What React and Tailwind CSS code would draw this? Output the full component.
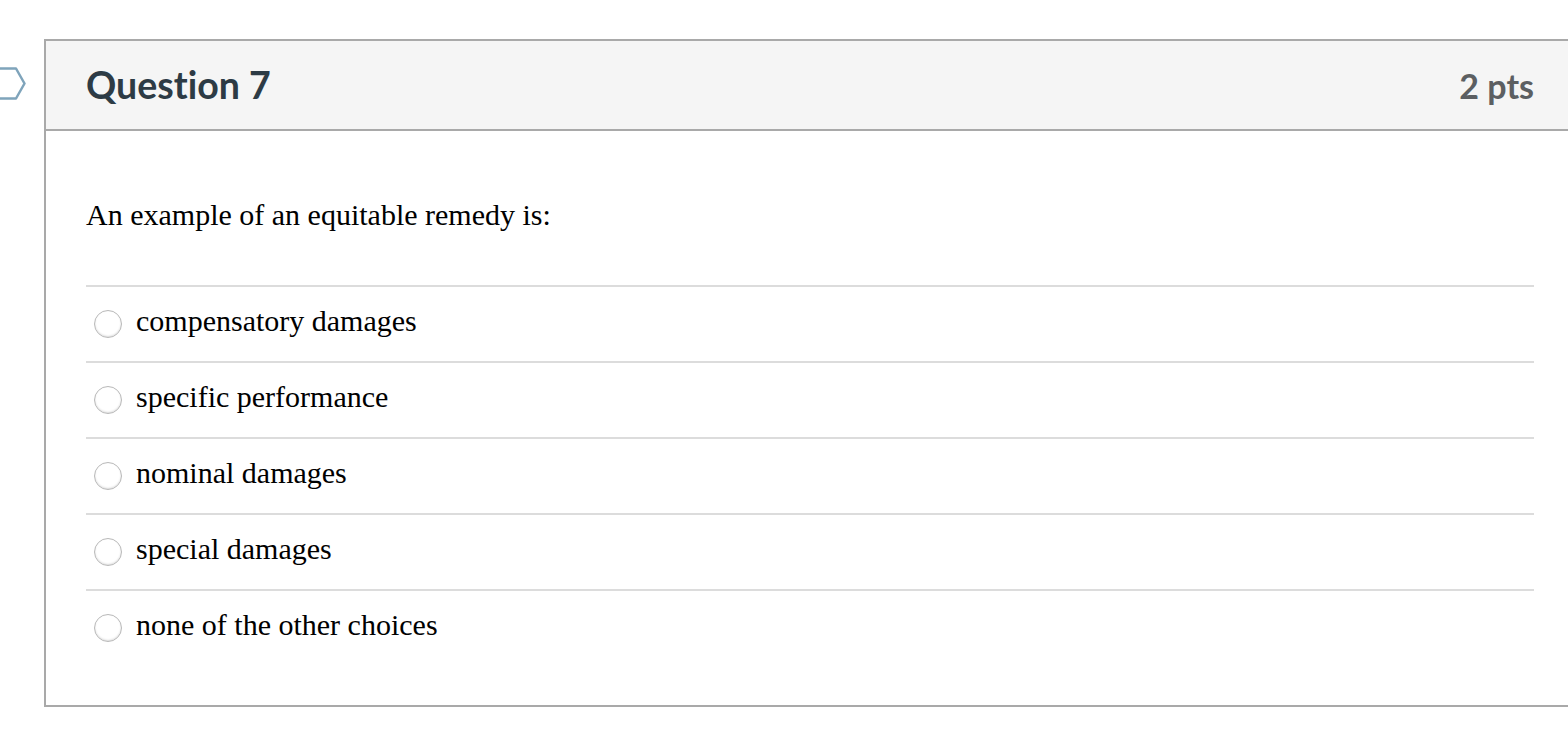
const answers = [
  'compensatory damages',
  'specific performance',
  'nominal damages',
  'special damages',
  'none of the other choices',
];

function Radio() {
  return (
    <span className="w-[28px] h-[28px] shrink-0 rounded-full border-[1.5px] border-[#b9b9b9] bg-white shadow-[inset_0_-1px_2px_rgba(0,0,0,0.14)]" />
  );
}

function Flag() {
  return (
    <svg width="28" height="36" viewBox="0 0 28 36" className="shrink-0" fill="none">
      <path d="M-4 1.5H16L24.5 16.5L16 31.5H-4" stroke="#7fa4bb" strokeWidth="2.5" strokeLinejoin="round" />
    </svg>
  );
}

export default function App() {
  return (
    <div className="w-[1568px] h-[756px] overflow-hidden bg-white flex items-start pt-[39px]">
      <div className="w-[44px] shrink-0 pt-[28px]">
        <Flag />
      </div>
      <div className="flex-1 h-[668px] border-2 border-r-0 border-[#a9a9a9] flex flex-col">
        <div className="h-[90px] shrink-0 bg-[#f5f5f5] border-b-2 border-[#a9a9a9] flex items-center justify-between pl-[40px] pr-[34px]">
          <h2 className="font-['Lato',sans-serif] font-bold text-[37.5px] [font-variant-ligatures:none] text-[#2d3b45]">Question 7</h2>
          <span className="font-['Lato',sans-serif] font-bold text-[34px] text-[#5c5f62]">2 pts</span>
        </div>
        <div className="flex-1 pl-[40px] pr-[34px] font-['Liberation_Serif',serif] text-black text-[30px]">
          <p className="h-[154px] pt-[66px] leading-[36px]">An example of an equitable remedy is:</p>
          {answers.map((a) => (
            <div key={a} className="h-[76px] border-t-2 border-[#dcdcdc] flex items-center pl-[8px] gap-[14px]">
              <Radio />
              <span className="leading-[36px] pb-[6px]">{a}</span>
            </div>
          ))}
        </div>
      </div>
    </div>
  );
}
